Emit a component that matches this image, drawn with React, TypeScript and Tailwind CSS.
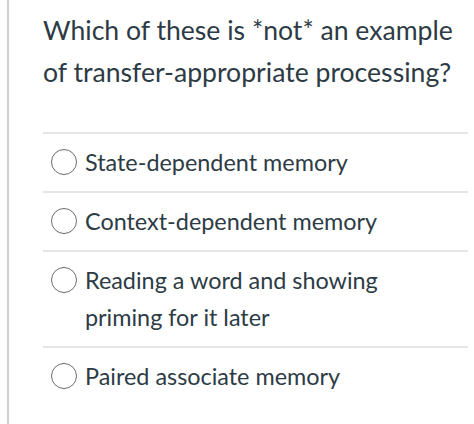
const options = [
  "State-dependent memory",
  "Context-dependent memory",
  "Reading a word and showing priming for it later",
  "Paired associate memory",
];

export default function App() {
  return (
    <div className="w-[474px] h-[424px] bg-white overflow-hidden font-['Lato','Liberation_Sans',sans-serif] text-[#2d3b45]">
      <div className="ml-[7px] h-full border-l-2 border-[#cfcfcf] pl-[34px] pr-[6px]">
        {/* Question */}
        <div className="pt-[9px] pb-[39px] text-[26.6px] leading-[42px]">
          Which of these is *not* an example of transfer-appropriate processing?
        </div>

        {/* Answers */}
        <ul>
          {options.map((option, index) => (
            <li
              key={index}
              className="flex items-start gap-2 border-t-2 border-[#e6e6e6] py-[10px] pl-2 text-[23.4px] leading-[37px]"
            >
              <span className="mt-[5px] w-[26px] h-[26px] shrink-0 rounded-full border-[1.5px] border-[#6b6b6b] bg-white" />
              <span className="max-w-[310px]">{option}</span>
            </li>
          ))}
        </ul>
      </div>
    </div>
  );
}
